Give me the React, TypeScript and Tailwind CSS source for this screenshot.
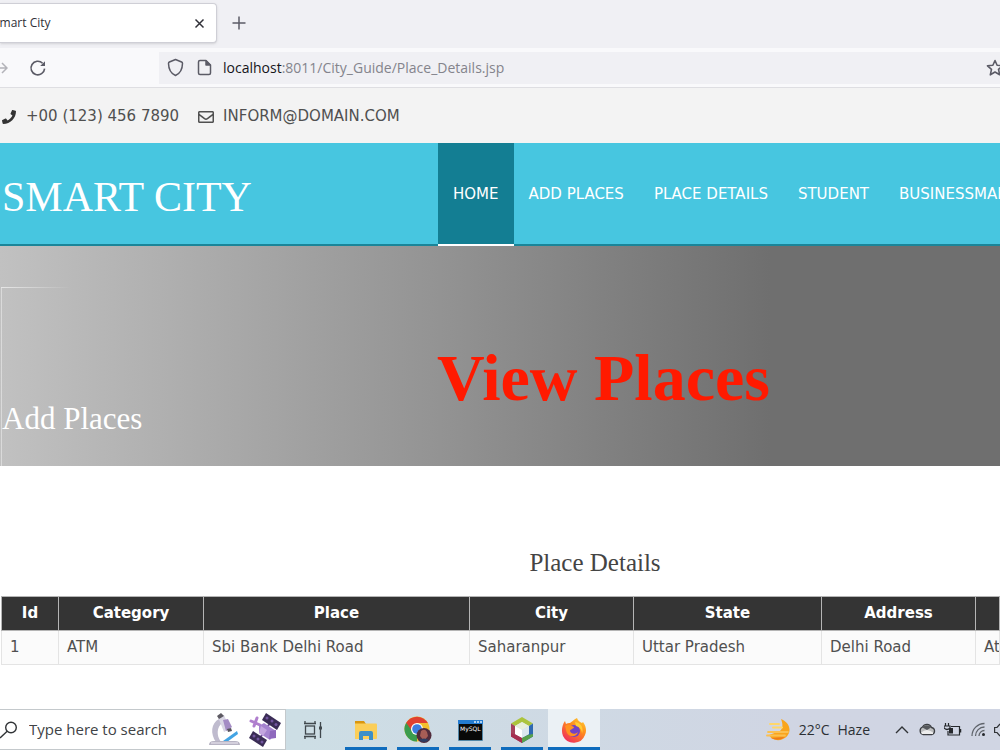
import React from 'react';
import { FaPhone, FaRegEnvelope } from 'react-icons/fa';

const navItems = ['ADD PLACES', 'PLACE DETAILS', 'STUDENT', 'BUSINESSMAN'];

const columns = [
  { name: 'Id', width: 'w-[57px]' },
  { name: 'Category', width: 'w-[145px]' },
  { name: 'Place', width: 'w-[266px]' },
  { name: 'City', width: 'w-[164px]' },
  { name: 'State', width: 'w-[188px]' },
  { name: 'Address', width: 'w-[154px]' },
  { name: '', width: '' },
];

const places = [['1', 'ATM', 'Sbi Bank Delhi Road', 'Saharanpur', 'Uttar Pradesh', 'Delhi Road', 'At']];

const ReloadIcon = () => (
  <svg width="18" height="18" viewBox="0 0 18 18" fill="none" stroke="#5b5b66" strokeWidth="1.6">
    <path d="M15.6 9.6A6.8 6.8 0 1 1 13.6 4.2" />
    <path d="M16 2.2V7h-4.8z" fill="#5b5b66" stroke="none" />
  </svg>
);

const ShieldIcon = () => (
  <svg width="17" height="19" viewBox="0 0 17 19" fill="none" stroke="#5b5b66" strokeWidth="1.5" strokeLinejoin="round">
    <path d="M8.5 1.5L14.6 4q.9.4.9 1.4c-.1 6-2.3 9.9-7 12.1C3.8 15.3 1.6 11.4 1.5 5.4q0-1 .9-1.4z" />
  </svg>
);

const PageIcon = () => (
  <svg width="15" height="17" viewBox="0 0 15 17" fill="none" stroke="#5b5b66" strokeWidth="1.5" strokeLinejoin="round">
    <path d="M3 1.5h6L13.500 6v8q0 1.500-1.500 1.500H3q-1.500 0-1.500-1.500V3Q1.500 1.500 3 1.500z" />
    <path d="M9 2v4h4z" fill="#5b5b66" />
  </svg>
);

const StarIcon = () => (
  <svg width="18" height="18" viewBox="0 0 18 18" fill="none" stroke="#5b5b66" strokeWidth="1.6" strokeLinejoin="round">
    <path d="M9 1.500l2.100 4.800 5.400.5-4 3.600 1.200 5.400L9 13l-4.700 2.800 1.200-5.400-4-3.600 5.400-.5z" />
  </svg>
);

const MicroscopeIcon = () => (
  <svg width="34" height="34" viewBox="0 0 34 34" fill="none">
    <path d="M11 6C3 10 2 21 8 29h5C8 22 9 14 14 10z" fill="#bfbbce" />
    <path d="M10 4l6-2 6 14-6 3z" fill="#d9d6e4" />
    <path d="M15 7l5-1 4 8-6 4z" fill="#a48cc4" />
    <path d="M9 3l4-3 3 3-5 3z" fill="#5d5a62" />
    <path d="M19 16l4-1 1 3-4 1z" fill="#55525c" />
    <path d="M15 28l14-10 1 3-11 8z" fill="#43a4e4" />
    <path d="M1 32q0-4 5-4h21q5 0 5 4z" fill="#b7b3c3" />
    <path d="M3 30h27" stroke="#dcd9e5" strokeWidth="1.500" />
  </svg>
);

const SatelliteIcon = () => (
  <svg width="34" height="36" viewBox="0 0 34 36">
    <path d="M24 8L10 29" stroke="#6d4d99" strokeWidth="2" />
    <path d="M3 9l9 4M9 6l-3 8" stroke="#b07fce" strokeWidth="3" strokeLinecap="round" />
    <path d="M11 14l5-3 12 8-6 9-11-7z" fill="#a583cf" />
    <path d="M22 19l6-1v8l-7 1z" fill="#8e69bd" />
    <path d="M13 14l6 4-4 6-4-3z" fill="#c3a5df" />
    <g fill="#3a2c55">
      <path d="M18 1l15 10-4 7-15-10z" />
      <path d="M5 19l14 9-4 7L1 26z" />
    </g>
    <g fill="#72569f">
      <circle cx="19" cy="6" r="1.500" />
      <circle cx="24" cy="9" r="1.500" />
      <circle cx="28" cy="12.500" r="1.500" />
      <circle cx="6" cy="24" r="1.500" />
      <circle cx="10" cy="27" r="1.500" />
      <circle cx="14" cy="30" r="1.500" />
    </g>
  </svg>
);

const TaskViewIcon = () => (
  <svg width="20" height="18" viewBox="0 0 20 18" fill="none" stroke="#40484d" strokeWidth="1.300">
    <path d="M1 2.500h12M1 15.500h12M2 0v2.500M12 0v2.500M2 15.500V18M12 15.500V18" />
    <rect x="2.500" y="5" width="9" height="8" />
    <path d="M17.500 1v16" />
    <path d="M16 7h3" strokeWidth="3" />
  </svg>
);

const FolderIcon = () => (
  <svg width="24" height="20" viewBox="0 0 24 20">
    <path d="M1 1h9l2 3H1z" fill="#d9960f" />
    <path d="M1 3.500h21q1 0 1 1V18q0 1-1 1H1z" fill="#fbce58" />
    <path d="M5 20v-7q0-2 2-2h10q2 0 2 2v7h-4v-4H9v4z" fill="#3c8fc8" />
  </svg>
);

const ChromeIcon = () => (
  <svg width="28" height="28" viewBox="0 0 28 28">
    <circle cx="13" cy="13" r="12.500" fill="#f3c02d" />
    <path d="M13 13L2.200 6.700A12.500 12.500 0 0 0 13 25.500z" fill="#3b9c4e" />
    <path d="M2.200 6.700L8 15l5-8h10.800A12.500 12.500 0 0 0 2.200 6.700z" fill="#e04030" />
    <circle cx="13" cy="13" r="6" fill="#fff" />
    <circle cx="13" cy="13" r="4.800" fill="#3d7de0" />
    <circle cx="20" cy="19.500" r="7.500" fill="#512c3c" />
    <path d="M17 15q4-3 6 1l1 4-4 5-4-5z" fill="#a75d56" />
    <path d="M15 24q5-3 10 0-5 4-10 0z" fill="#2d3d63" />
  </svg>
);

const TerminalIcon = () => (
  <svg width="25" height="21" viewBox="0 0 25 21">
    <rect width="25" height="21" rx="1" fill="#5287a7" />
    <rect width="25" height="4" fill="#237bd0" />
    <path d="M16 2h2M19 2h2M22 2h2" stroke="#dcecf7" strokeWidth="1.500" />
    <rect x="1" y="4" width="23" height="16" fill="#080808" />
    <text x="2" y="11" fontSize="6" fontFamily="DejaVu Sans, sans-serif" fill="#fff">MySQL</text>
  </svg>
);

const NetBeansIcon = () => (
  <svg width="24" height="26" viewBox="0 0 24 26">
    <path d="M12 0l11 6.500-4 2.500-7-4-7 4-4-2.500z" fill="#acc43c" />
    <path d="M1 6.500L5 9v8l7 4v5L1 19.500z" fill="#a5415c" />
    <path d="M23 6.500L19 9v8l-7 4v5l11-6.500z" fill="#2f69b0" />
    <path d="M12 5l7 4-7 4-7-4z" fill="#e8efda" />
    <path d="M5 9l7 4v8l-7-4z" fill="#fff" />
    <path d="M19 9l-7 4v8l7-4z" fill="#dbe7ee" />
    <path d="M1 16l5 2 6 3v5L1 19.500z" fill="#a52e50" />
    <path d="M23 17l-5 1-6 3v5l11-6.500z" fill="#59a14a" />
  </svg>
);

const FirefoxIcon = () => (
  <svg width="26" height="26" viewBox="0 0 26 26">
    <defs>
      <linearGradient id="fox" x1="1" y1="0" x2="0.3" y2="1">
        <stop offset="0" stopColor="#ffda35" />
        <stop offset="0.45" stopColor="#ff8a1c" />
        <stop offset="1" stopColor="#f0305a" />
      </linearGradient>
    </defs>
    <path d="M16 1c1 3 3 4 5 5l1-1c3 4 4 9 2 13A12 12 0 0 1 2 19C0 14 1 8 4 4l1 3c1-1 3-1 4-1 2-1 3-3 7-5z" fill="url(#fox)" />
    <circle cx="13" cy="14" r="6" fill="#7042c5" />
    <path d="M4 9c4-3 7 0 9 1 0 2-4 2-4 4 1 3 5 4 8 1-2 6-9 5-11 1-1-2-1-4-2-7z" fill="#ff9120" />
    <path d="M14 5c6 1 9 5 7 12 0-4-2-7-6-8z" fill="#ffcd34" />
  </svg>
);

const HazeIcon = () => (
  <svg width="25" height="23" viewBox="0 0 25 23" fill="none">
    <path d="M15 1c12 5 10 17 2 20-6 3-12 0-14-4l11-4c3-3 3-7 1-12z" fill="#f9a51d" />
    <path d="M4 6h9M7 9.500h9" stroke="#ffd76a" strokeWidth="2" strokeLinecap="round" />
    <path d="M2 14h20M1 17.500h18" stroke="#fbc050" strokeWidth="1.800" strokeLinecap="round" />
    <path d="M5 20q8 4 14-1z" fill="#ee7b19" />
  </svg>
);

const CloudIcon = () => (
  <svg width="18" height="13" viewBox="0 0 18 13">
    <path d="M5 11.500a4 4 0 0 1-.5-7.500A5 5 0 0 1 13.500 4.500a3.600 3.600 0 0 1 .5 7z" fill="#bcbdbe" stroke="#3c3f43" strokeWidth="1.300" />
    <path d="M4.500 4.500A5 5 0 0 1 13 4.500L9 7z" fill="#55585c" />
    <path d="M3 9.500q6-5 12 0v1.500H4z" fill="#ededed" />
  </svg>
);

const BatteryIcon = () => (
  <svg width="18" height="14" viewBox="0 0 18 14" fill="none" stroke="#25282c" strokeWidth="1.200">
    <path d="M7 3.500h8.500v8.500H4V8" />
    <path d="M16.500 6v3.500" strokeWidth="1.500" />
    <path d="M1.500 0v3M4.500 0v3M0 3h6v2Q3 8 0 5z" />
    <path d="M5 5h4v5.500H5z" fill="#25282c" stroke="none" />
  </svg>
);

const WifiIcon = () => (
  <svg width="15" height="15" viewBox="0 0 15 15" fill="none" stroke="#5f646b" strokeWidth="1.300">
    <path d="M1 14A12.500 12.500 0 0 1 13.500 1.500M4.500 14A9 9 0 0 1 13.500 5M8 14a5.500 5.500 0 0 1 5.500-5.500" />
    <circle cx="12.500" cy="12.500" r="1.500" fill="#25282c" stroke="none" />
  </svg>
);

const runningApps = [
  { name: 'File Explorer', icon: <FolderIcon /> },
  { name: 'Chrome', icon: <ChromeIcon /> },
  { name: 'MySQL', icon: <TerminalIcon /> },
  { name: 'NetBeans', icon: <NetBeansIcon /> },
];

const Browser: React.FC = () => (
  <div className="font-['Open_Sans','Noto_Sans',sans-serif]">
    <div className="flex h-12 items-start bg-[#f0f0f4] pt-[3px]">
      <div className="flex h-10 w-[217px] items-center justify-between overflow-hidden rounded-r border border-l-0 border-[#cfcfd6] bg-white pr-[11px] shadow">
        <span className="-ml-[7px] whitespace-nowrap text-xs text-[#303038]">Smart City</span>
        <button aria-label="Close tab" className="flex">
          <svg width="11" height="11" viewBox="0 0 11 11" stroke="#303038" strokeWidth="1.500"><path d="M1.500 1.500l8 8M9.500 1.500l-8 8" /></svg>
        </button>
      </div>
      <button aria-label="New tab" className="ml-[15px] flex h-10 items-center">
        <svg width="14" height="14" viewBox="0 0 14 14" stroke="#5b5b66" strokeWidth="1.500"><path d="M7 .5v13M.5 7h13" /></svg>
      </button>
    </div>
    <div className="flex h-10 items-center overflow-hidden border-b border-[#dedee2] bg-[#f9f9fb]">
      <button aria-label="Forward" className="flex w-[29px] shrink-0">
        <svg width="8" height="12" viewBox="0 0 8 12" fill="none" stroke="#b3b3b9" strokeWidth="1.500"><path d="M0 6h7M2 1l5 5-5 5" /></svg>
      </button>
      <button aria-label="Reload" className="flex w-[130px] shrink-0"><ReloadIcon /></button>
      <div className="flex h-8 min-w-0 flex-1 items-center bg-[#f0f0f4] pl-2">
        <ShieldIcon />
        <span className="ml-[13px]"><PageIcon /></span>
        <label htmlFor="url" className="ml-[11px] text-sm text-[#15141a]">localhost</label>
        <input id="url" defaultValue=":8011/City_Guide/Place_Details.jsp" className="min-w-0 flex-1 bg-transparent text-sm text-[#84848c] outline-none" />
        <button aria-label="Bookmark" className="-mr-1 shrink-0"><StarIcon /></button>
      </div>
    </div>
  </div>
);

const PlacesTable: React.FC = () => (
  <div className="overflow-hidden pl-px">
    <table className="w-full table-fixed border-collapse text-[15px] leading-[17px]">
      <thead>
        <tr className="bg-[#343434] text-white">
          {columns.map((col, i) => (
            <th key={i} className={`${col.width} border border-[#b5b5b5] py-2 font-bold`}>{col.name}</th>
          ))}
        </tr>
      </thead>
      <tbody>
        {places.map((row) => (
          <tr key={row[0]} className="bg-[#fbfbfb] text-[#505050]">
            {row.map((cell, i) => (
              <td key={i} className="overflow-hidden whitespace-nowrap border border-[#e4e4e4] px-2 py-2">{cell}</td>
            ))}
          </tr>
        ))}
      </tbody>
    </table>
  </div>
);

const Taskbar: React.FC = () => (
  <footer className="mt-auto flex h-[41px] items-stretch bg-linear-to-r from-[#cddee5] from-30% to-[#d0d5e3] to-80% font-['Open_Sans','Noto_Sans',sans-serif] text-[#2b2f33]">
    <div className="flex w-[286px] shrink-0 items-center border border-l-0 border-[#c4c9cc] bg-white">
      <svg width="18" height="18" viewBox="0 0 18 18" fill="none" stroke="#303336" strokeWidth="1.400"><circle cx="11" cy="6.500" r="5.300" /><path d="M7.200 10.300L0 17" /></svg>
      <input aria-label="Search" placeholder="Type here to search" className="ml-[11px] w-[179px] bg-transparent text-[15px] outline-none placeholder:text-[#404346]" />
      <MicroscopeIcon />
      <span className="ml-1.5"><SatelliteIcon /></span>
    </div>
    <button aria-label="Task view" className="flex w-[54px] shrink-0 items-center justify-center"><TaskViewIcon /></button>
    {runningApps.map((app) => (
      <button key={app.name} aria-label={app.name} className="flex w-[52px] shrink-0 flex-col items-center">
        <span className="flex flex-1 items-center pt-1">{app.icon}</span>
        <span className="h-[3px] w-[42px] bg-[#0f6cbd]" />
      </button>
    ))}
    <button aria-label="Firefox" className="flex w-[52px] shrink-0 flex-col items-center bg-[#ebf1f5]">
      <span className="flex flex-1 items-center pt-1">
        <FirefoxIcon />
      </span>
      <span className="h-[3px] w-full bg-[#0f6cbd]" />
    </button>
    <div className="ml-auto flex items-center overflow-hidden text-sm">
      <HazeIcon />
      <span className="ml-2 whitespace-nowrap">22°C</span>
      <span className="ml-2">Haze</span>
      <svg className="ml-[25px]" width="14" height="8" viewBox="0 0 14 8" fill="none" stroke="#303336" strokeWidth="1.400"><path d="M1 7l6-6 6 6" /></svg>
      <span className="ml-[9px]"><CloudIcon /></span>
      <span className="ml-2"><BatteryIcon /></span>
      <span className="ml-[9px]"><WifiIcon /></span>
      <svg className="ml-2" width="6" height="14" viewBox="0 0 6 14" fill="none" stroke="#303336" strokeWidth="1.200"><path d="M6 1L3 4.500H.6v5H3L6 13" /></svg>
    </div>
  </footer>
);

const App: React.FC = () => {
  return (
    <div className="flex min-h-screen flex-col overflow-hidden bg-white font-['DejaVu_Sans',Verdana,sans-serif]">
      <Browser />
      <div className="flex h-[55px] items-center bg-[#f3f3f3] pl-0.5 pt-0.5 text-[15px] text-[#505050]">
        <FaPhone size={14} className="text-[#333]" />
        <span className="ml-2.5">+00 (123) 456 7890</span>
        <FaRegEnvelope size={16} className="ml-[19px]" />
        <a href="mailto:inform@domain.com" className="ml-[9px]">INFORM@DOMAIN.COM</a>
      </div>
      <header className="flex h-[103px] overflow-hidden bg-[#47c6e0] text-white">
        <div className="flex w-[438px] shrink-0 items-center border-b-2 border-[#1a8599] pl-0.5 pt-2">
          <a href="#" className="font-['Liberation_Serif',serif] text-[42px]">SMART CITY</a>
        </div>
        <nav className="flex flex-1 text-[15px]">
          <a href="#" className="flex items-center border-b-2 border-white bg-[#137e93] px-[15px] pt-0.5">HOME</a>
          <div className="flex flex-1 border-b-2 border-[#1a8599]">
            {navItems.map((item) => (
              <a key={item} href="#" className="flex shrink-0 items-center whitespace-nowrap px-[15px] pt-0.5">{item}</a>
            ))}
          </div>
        </nav>
      </header>
      <section className="relative flex h-[220px] flex-col bg-linear-to-r from-[#c1c1c1] via-[#929292] via-45% to-[#6f6f6f] to-77% pl-px pt-[41px]">
        <div className="h-px w-[70px] bg-linear-to-r from-white/60 to-transparent" />
        <div className="flex-1 border-l border-white/40">
          <h1 className="pt-[113px] font-['Liberation_Serif',serif] text-[31px] leading-9 text-white">Add Places</h1>
        </div>
        <p className="absolute left-[437px] top-24 whitespace-nowrap font-['Liberation_Serif',serif] text-[66px] font-bold leading-[72px] text-[#ff1a00]">View Places</p>
      </section>
      <main className="pb-10 pt-[81px]">
        <h2 className="mb-[17px] ml-[190px] text-center font-['Liberation_Serif',serif] text-[25px] leading-8 text-[#444]">Place Details</h2>
        <PlacesTable />
      </main>
      <Taskbar />
    </div>
  );
};

export default App;
